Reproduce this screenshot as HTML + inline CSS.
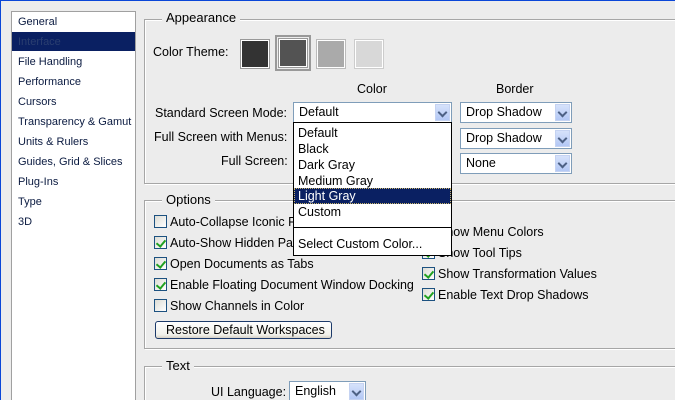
<!DOCTYPE html>
<html style="overflow:hidden;width:675px;height:400px"><head><style>
*{margin:0;padding:0;box-sizing:border-box}
body{width:675px;height:400px;overflow:hidden;background:#ececec;font-family:"Liberation Sans","DejaVu Sans",sans-serif;font-size:12px;color:#000;position:relative}
.a{position:absolute;white-space:nowrap}
.gb{position:absolute;border:1px solid #a6a6a6;box-shadow:inset 1px 1px 0 #fff,1px 1px 0 #fff}
.gt{position:absolute;background:#ececec;padding:0 4px;font-size:13px;line-height:14px;color:#000}
.li{position:absolute;left:6px;font-size:11px;line-height:14px;color:#0a1a40}
.sel{position:absolute;height:21px;border:1px solid #7f9db9;background:#fff}
.sel span{position:absolute;left:5px;top:2px;font-size:12.5px}
.sel i{position:absolute;right:1px;top:1px;width:15px;height:17px;background:linear-gradient(#d6e2fb,#b3c8f5);border:1px solid #c5d3f2}
.sel i:after{content:"";position:absolute;left:3px;top:4px;width:5px;height:5px;border-right:2px solid #4d6185;border-bottom:2px solid #4d6185;transform:rotate(45deg)}
.cb{position:absolute;width:13px;height:13px;border:1px solid #1c5180;background:linear-gradient(135deg,#dcdcd5,#fff)}
.cb.k:after{content:"";position:absolute;left:3px;top:1px;width:4px;height:7px;border-right:2px solid #21a121;border-bottom:2px solid #21a121;transform:rotate(40deg)}
.lb{position:absolute;font-size:12.5px;line-height:14px;white-space:nowrap}
.dd div{position:absolute;left:4px;font-size:12.5px;line-height:16px}
</style></head><body>
<div class="a" style="left:0;top:0;width:675px;height:1px;background:#0a46d8"></div>
<div class="a" style="left:0;top:0;width:1px;height:400px;background:#0a46d8"></div>

<div class="a" style="left:11px;top:11px;width:125px;height:389px;background:#fff;border:1px solid #a0a0a0;border-bottom:none;overflow:hidden">
<div class="li" style="top:3px">General</div>
<div class="a" style="left:0;top:20px;width:123px;height:19px;background:#0a2062"></div>
<div class="li" style="top:23px;color:#2a3e70">Interface</div>
<div class="li" style="top:43px">File Handling</div>
<div class="li" style="top:63px">Performance</div>
<div class="li" style="top:83px">Cursors</div>
<div class="li" style="top:103px">Transparency &amp; Gamut</div>
<div class="li" style="top:123px">Units &amp; Rulers</div>
<div class="li" style="top:143px">Guides, Grid &amp; Slices</div>
<div class="li" style="top:163px">Plug-Ins</div>
<div class="li" style="top:183px">Type</div>
<div class="li" style="top:203px">3D</div>
</div>

<div class="gb" style="left:144px;top:19px;width:531px;height:165px;border-right:none"></div>
<div class="gt" style="left:162px;top:11px">Appearance</div>
<div class="lb" style="left:153px;top:45px">Color Theme:</div>
<div class="a" style="left:240px;top:39px;width:30px;height:30px;background:#333;border:1px solid #999;box-shadow:inset 0 0 0 1px #fff"></div>
<div class="a" style="left:275px;top:35px;width:36px;height:36px;border:2px solid #999;background:#ececec"></div>
<div class="a" style="left:278px;top:38px;width:30px;height:30px;background:#535353;border:1px solid #999;box-shadow:inset 0 0 0 1px #fff"></div>
<div class="a" style="left:316px;top:39px;width:30px;height:30px;background:#aaa;border:1px solid #bbb;box-shadow:inset 0 0 0 1px #fff"></div>
<div class="a" style="left:354px;top:39px;width:30px;height:30px;background:#d8d8d8;border:1px solid #ccc;box-shadow:inset 0 0 0 1px #fff"></div>

<div class="lb" style="left:357px;top:82px">Color</div>
<div class="lb" style="left:496px;top:82px">Border</div>
<div class="lb" style="left:155px;top:106px">Standard Screen Mode:</div>
<div class="lb" style="left:154px;top:130px">Full Screen with Menus:</div>
<div class="lb" style="left:221px;top:154px">Full Screen:</div>

<div class="sel" style="left:293px;top:102px;width:159px"><span>Default</span><i></i></div>
<div class="sel" style="left:460px;top:102px;width:112px"><span>Drop Shadow</span><i></i></div>
<div class="sel" style="left:460px;top:128px;width:112px"><span>Drop Shadow</span><i></i></div>
<div class="sel" style="left:460px;top:153px;width:112px"><span>None</span><i></i></div>

<div class="gb" style="left:144px;top:200px;width:531px;height:149px;border-right:none"></div>
<div class="gt" style="left:162px;top:193px">Options</div>

<div class="cb" style="left:154px;top:215px"></div><div class="lb" style="left:170px;top:215px">Auto-Collapse Iconic Panels</div>
<div class="cb k" style="left:154px;top:236px"></div><div class="lb" style="left:170px;top:236px">Auto-Show Hidden Panels</div>
<div class="cb k" style="left:154px;top:257px"></div><div class="lb" style="left:170px;top:257px">Open Documents as Tabs</div>
<div class="cb k" style="left:154px;top:278px"></div><div class="lb" style="left:170px;top:278px">Enable Floating Document Window Docking</div>
<div class="cb" style="left:154px;top:299px"></div><div class="lb" style="left:170px;top:299px">Show Channels in Color</div>

<div class="cb" style="left:422px;top:225px"></div><div class="lb" style="left:438px;top:225px">Show Menu Colors</div>
<div class="cb k" style="left:422px;top:246px"></div><div class="lb" style="left:438px;top:246px">Show Tool Tips</div>
<div class="cb k" style="left:422px;top:267px"></div><div class="lb" style="left:438px;top:267px">Show Transformation Values</div>
<div class="cb k" style="left:422px;top:288px"></div><div class="lb" style="left:438px;top:288px">Enable Text Drop Shadows</div>

<div class="a" style="left:155px;top:321px;width:177px;height:18px;border:1px solid #1c3a6a;border-radius:3px;background:linear-gradient(#fff,#f0f0ea 80%,#d6d0c5)"><span class="lb" style="left:10px;top:1px">Restore Default Workspaces</span></div>

<div class="gb" style="left:144px;top:366px;width:531px;height:34px;border-right:none;border-bottom:none"></div>
<div class="gt" style="left:162px;top:359px">Text</div>
<div class="lb" style="left:211px;top:385px">UI Language:</div>
<div class="sel" style="left:289px;top:381px;width:77px;height:19px;border-bottom:none"><span>English</span><i style="height:17px"></i></div>

<div class="a dd" style="left:293px;top:122px;width:159px;height:134px;background:#fff;border:1px solid #000">
<div style="top:2px">Default</div>
<div style="top:18px">Black</div>
<div style="top:34px">Dark Gray</div>
<div style="top:50px">Medium Gray</div>
<div style="left:0;top:65px;width:157px;height:16px;background:#0a2062;outline:1px dotted #c8b46a;outline-offset:-1px"></div>
<div style="top:65px;color:#fff">Light Gray</div>
<div style="top:81px">Custom</div>
<div style="left:0;top:104px;width:157px;height:1px;background:#000"></div>
<div style="top:113px">Select Custom Color...</div>
</div>
</body></html>
